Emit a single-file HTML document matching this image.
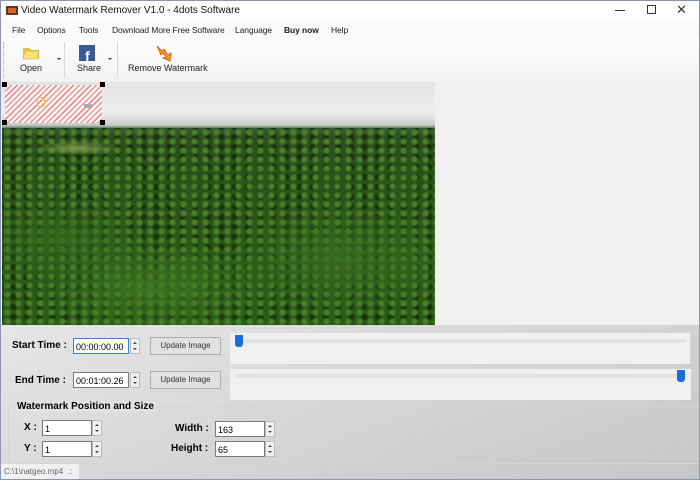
<!DOCTYPE html>
<html><head><style>
*{margin:0;padding:0;box-sizing:border-box}
body{width:700px;height:480px;overflow:hidden;font-family:"Liberation Sans",sans-serif;font-size:9px;color:#000;background:#fff;position:relative}
.a{position:absolute}
.border{position:absolute;inset:0;border:1px solid #8a96b4;pointer-events:none;z-index:10}
.menu span{position:absolute;top:25px;font-size:8.5px;color:#222;letter-spacing:-0.1px}
.tb{position:absolute;top:38px;left:1px;width:698px;height:43px;background:linear-gradient(#fdfdfd,#f2f2f2)}
.lbl{font-size:9px;color:#222;position:absolute}
.sep{position:absolute;top:42px;width:1px;height:36px;background:#d8d8d8}
.inp{position:absolute;background:#fff;border:1px solid #7a7a7a;font-size:9px;padding:3px 2px;height:16px}
.spin{position:absolute;width:10px;height:16px;border:1px solid #bbb;background:#f0f0f0}
.spin:before{content:"";position:absolute;left:2px;top:3px;border:2px solid transparent;border-bottom-color:#444;border-top:0}
.spin:after{content:"";position:absolute;left:2px;bottom:3px;border:2px solid transparent;border-top-color:#444;border-bottom:0}
.btn{position:absolute;width:71px;height:18px;background:#e1e1e1;border:1px solid #adadad;font-size:8px;color:#333;text-align:center;line-height:16px}
.b{font-weight:bold;font-size:10px;position:absolute}
.forest{position:absolute;left:2px;top:128px;width:433px;height:197px;
background:
radial-gradient(ellipse 45px 7px at 75px 20px,#7d9a4c,transparent),
radial-gradient(ellipse 120px 50px at 150px 160px,#3f7a22cc,transparent),
radial-gradient(ellipse 120px 60px at 340px 130px,#3a7020cc,transparent),
radial-gradient(ellipse 90px 40px at 60px 110px,#376a1ecc,transparent),
radial-gradient(circle at 50% 50%,#4a8028 0 2px,transparent 4px) 0 0/11px 9px,
radial-gradient(circle at 50% 50%,#18330c 0 2px,transparent 4px) 5px 4px/13px 10px,
linear-gradient(#3a5a32 0,#2c4e1c 12px,#2b531a 60px,#2a5a18 197px)}
</style></head><body>
<div class="border"></div>
<svg class="a" style="left:6px;top:5px" width="12" height="11"><rect x="0" y="1" width="12" height="9" fill="#5a3a2a"/><rect x="2" y="3" width="8" height="5" fill="#d8642a"/></svg>
<div class="a" style="left:21px;top:5px;font-size:10px;color:#111">Video Watermark Remover V1.0 - 4dots Software</div>
<div class="a" style="left:615px;top:10px;width:10px;height:1px;background:#333"></div>
<div class="a" style="left:647px;top:5px;width:9px;height:9px;border:1px solid #333"></div>
<div class="a" style="left:676px;top:2px;font-size:13px;color:#333">✕</div>
<div class="a" style="left:1px;top:20px;width:698px;height:18px;background:#fafafa"></div>
<div class="menu">
<span style="left:12px">File</span><span style="left:37px">Options</span><span style="left:79px">Tools</span>
<span style="left:112px">Download More Free Software</span><span style="left:235px">Language</span>
<span style="left:284px;font-weight:bold">Buy now</span><span style="left:331px">Help</span></div>
<div class="tb"></div>
<div class="a" style="left:3px;top:42px;width:1px;height:36px;border-left:1px dotted #aaa"></div>
<svg class="a" style="left:22px;top:44px" width="18" height="16"><path d="M1 4h6l2 2h8v9H1z" fill="#e8c440"/><path d="M3 7h14l-2 8H1z" fill="#fbe27a" stroke="#c9a52a" stroke-width=".5"/></svg>
<div class="lbl" style="left:20px;top:63px">Open</div>
<div class="a" style="left:57px;top:58px;border:2px solid transparent;border-top:2px solid #333"></div>
<div class="sep" style="left:64px"></div>
<svg class="a" style="left:79px;top:45px" width="16" height="16"><rect width="16" height="16" fill="#3b5998"/><text x="6" y="16" font-family="Liberation Sans" font-weight="bold" font-size="14" fill="#fff">f</text></svg>
<div class="lbl" style="left:77px;top:63px">Share</div>
<div class="a" style="left:108px;top:58px;border:2px solid transparent;border-top:2px solid #333"></div>
<div class="sep" style="left:117px"></div>
<svg class="a" style="left:155px;top:44px" width="20" height="18"><path d="M2 2l5 5 2-2 4 6 3-2-1 8-7-3 3-1-3-4-2 2z" fill="#f39a1e" stroke="#d2521a" stroke-width=".8"/></svg>
<div class="lbl" style="left:128px;top:63px">Remove Watermark</div>
<div class="a" style="left:1px;top:81px;width:698px;height:244px;background:#f0f0f0"></div>
<div class="a" style="left:2px;top:82px;width:433px;height:46px;background:linear-gradient(#e4e4e4,#eeeeee 30px,#c8ccc8 43px,#6a7a66)"></div>
<div class="forest"></div>
<div class="a" style="left:5px;top:85px;width:97px;height:38px;background:repeating-linear-gradient(135deg,#ff7a7a 0 1.2px,#f4f4f4 1.2px 4px)"></div>
<div class="a" style="left:37px;top:97px;width:8px;height:10px;border:1px solid #f0c040;border-radius:3px"></div>
<div class="a" style="left:84px;top:104px;width:8px;height:4px;background:#aaa"></div>
<div class="a" style="left:2px;top:82px;width:5px;height:5px;background:#000"></div>
<div class="a" style="left:100px;top:82px;width:5px;height:5px;background:#000"></div>
<div class="a" style="left:2px;top:120px;width:5px;height:5px;background:#000"></div>
<div class="a" style="left:100px;top:120px;width:5px;height:5px;background:#000"></div>
<div class="a" style="left:1px;top:325px;width:698px;height:154px;background:linear-gradient(160deg,#e6e6e6,#d6d6d6 50%,#c6c6c6)"></div>
<div class="b" style="left:12px;top:340px">Start Time :</div>
<div class="inp" style="left:73px;top:338px;width:56px;border-color:#3c7fd0">00:00:00.00</div>
<div class="spin" style="left:130px;top:338px"></div>
<div class="btn" style="left:150px;top:337px">Update Image</div>
<div class="a" style="left:230px;top:333px;width:460px;height:31px;background:#f0f0f0"></div>
<div class="a" style="left:236px;top:339px;width:450px;height:4px;background:#e2e2e2"></div>
<div class="a" style="left:235px;top:335px;width:8px;height:12px;background:#1a6fd6;border-radius:0 0 3px 3px"></div>
<div class="b" style="left:15px;top:375px">End Time :</div>
<div class="inp" style="left:73px;top:372px;width:56px">00:01:00.26</div>
<div class="spin" style="left:130px;top:372px"></div>
<div class="btn" style="left:150px;top:371px">Update Image</div>
<div class="a" style="left:230px;top:369px;width:461px;height:31px;background:#f0f0f0"></div>
<div class="a" style="left:236px;top:374px;width:450px;height:4px;background:#e2e2e2"></div>
<div class="a" style="left:677px;top:370px;width:8px;height:12px;background:#1a6fd6;border-radius:0 0 3px 3px"></div>
<div class="a" style="left:8px;top:406px;width:690px;height:58px;border:1px solid #d4d4d4;border-right:0"></div>
<div class="b" style="left:15px;top:401px;background:#e2e2e2;padding:0 2px">Watermark Position and Size</div>
<div class="b" style="left:24px;top:422px">X :</div>
<div class="inp" style="left:42px;top:420px;width:50px">1</div><div class="spin" style="left:92px;top:420px"></div>
<div class="b" style="left:24px;top:443px">Y :</div>
<div class="inp" style="left:42px;top:441px;width:50px">1</div><div class="spin" style="left:92px;top:441px"></div>
<div class="b" style="left:175px;top:423px">Width :</div>
<div class="inp" style="left:215px;top:421px;width:50px">163</div><div class="spin" style="left:265px;top:421px"></div>
<div class="b" style="left:171px;top:443px">Height :</div>
<div class="inp" style="left:215px;top:441px;width:50px">65</div><div class="spin" style="left:265px;top:441px"></div>
<div class="a" style="left:1px;top:464px;width:78px;height:15px;background:#f0f0f0;font-size:8px;color:#666;padding:3px 3px">C:\1\natgeo.mp4 &nbsp;.:</div>
</body></html>
